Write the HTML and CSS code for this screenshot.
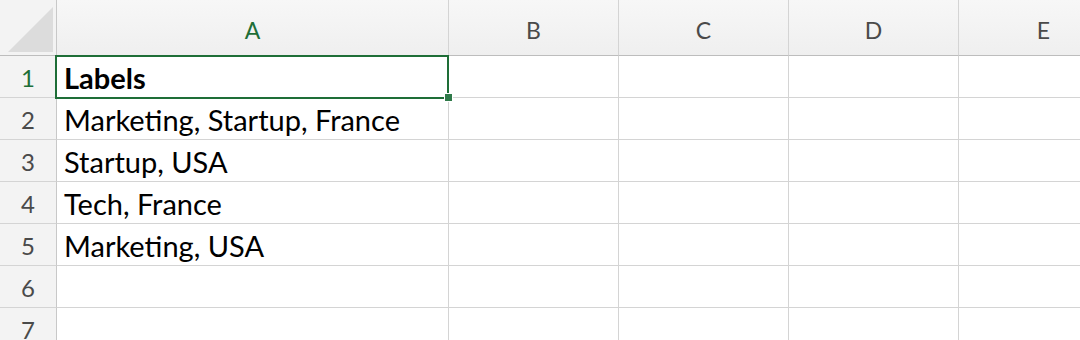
FILE: index.html
```html
<!DOCTYPE html>
<html lang="en">
<head>
    <meta charset="UTF-8">
    <title>Sheet</title>
    <link rel="stylesheet" href="styles.css">
</head>
<body>
    <div class="sheet">
        <div class="corner"><span class="corner-tri"></span></div>
        <div class="col-head active">A</div>
        <div class="col-head">B</div>
        <div class="col-head">C</div>
        <div class="col-head">D</div>
        <div class="col-head">E</div>

        <div class="row-head active">1</div>
        <div class="cell bold selected">Labels<span class="sel-box"></span><span class="sel-handle"></span></div>
        <div class="cell"></div><div class="cell"></div><div class="cell"></div><div class="cell"></div>

        <div class="row-head">2</div>
        <div class="cell">Marketing, Startup, France</div>
        <div class="cell"></div><div class="cell"></div><div class="cell"></div><div class="cell"></div>

        <div class="row-head">3</div>
        <div class="cell">Startup, USA</div>
        <div class="cell"></div><div class="cell"></div><div class="cell"></div><div class="cell"></div>

        <div class="row-head">4</div>
        <div class="cell">Tech, France</div>
        <div class="cell"></div><div class="cell"></div><div class="cell"></div><div class="cell"></div>

        <div class="row-head">5</div>
        <div class="cell">Marketing, USA</div>
        <div class="cell"></div><div class="cell"></div><div class="cell"></div><div class="cell"></div>

        <div class="row-head">6</div>
        <div class="cell"></div>
        <div class="cell"></div><div class="cell"></div><div class="cell"></div><div class="cell"></div>

        <div class="row-head">7</div>
        <div class="cell"></div>
        <div class="cell"></div><div class="cell"></div><div class="cell"></div><div class="cell"></div>
    </div>
</body>
</html>
```

FILE: styles.css
```css
body {
    margin: 0;
    background-color: white;
    font-family: Lato, "Open Sans", sans-serif;
    overflow: hidden;
}

.sheet {
    display: grid;
    grid-template-columns: 57px 392px 170px 170px 170px 170px;
    grid-template-rows: 56px repeat(7, 42px);
    width: 1129px;
}

.sheet > div {
    box-sizing: border-box;
    border-right: 1px solid #d4d4d4;
    border-bottom: 1px solid #d4d4d4;
}

.corner {
    position: relative;
    background-color: #f3f3f3;
    border-right-color: #c8c8c8 !important;
    border-bottom-color: #bdbdbd !important;
}

.corner-tri {
    position: absolute;
    right: 3px;
    bottom: 3px;
    width: 45px;
    height: 45px;
    background-color: #dcdcdc;
    clip-path: polygon(100% 0, 100% 100%, 0 100%);
}

.col-head {
    background: linear-gradient(#f7f7f7, #efefef);
    border-bottom-color: #bdbdbd !important;
    display: flex;
    align-items: center;
    justify-content: center;
    padding-top: 4px;
    font-size: 23px;
    color: #4a4a4a;
}

.row-head {
    background-color: #f3f3f3;
    border-right-color: #c8c8c8 !important;
    display: flex;
    align-items: center;
    justify-content: center;
    padding-top: 2px;
    font-size: 24px;
    color: #4a4a4a;
}

.active {
    color: #1e6e37;
}

.cell {
    display: flex;
    align-items: center;
    padding-left: 7px;
    padding-top: 2px;
    font-size: 29px;
    color: #000;
    white-space: nowrap;
}

.bold {
    font-weight: bold;
}

.selected {
    position: relative;
}

.sel-box {
    position: absolute;
    left: -2px;
    top: -1px;
    right: -1px;
    bottom: -2px;
    border: 2px solid #1e6e37;
}

.sel-handle {
    position: absolute;
    right: -5px;
    bottom: -5px;
    width: 7px;
    height: 7px;
    background-color: #2f7a49;
    border: 1px solid white;
}
```
